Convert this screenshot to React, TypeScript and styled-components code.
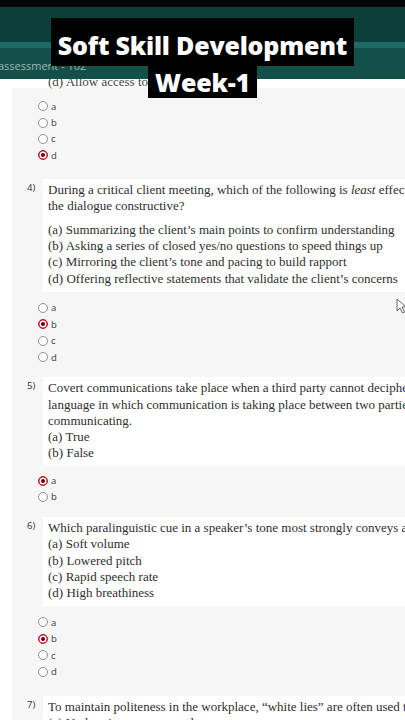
import React from 'react';
import styled, { createGlobalStyle } from 'styled-components';

const GlobalStyle = createGlobalStyle`
    html, body {
        margin: 0;
        padding: 0;
        width: 405px;
        height: 720px;
        overflow: hidden;
        background: #ffffff;
    }
`;

const Page = styled.div`
    position: relative;
    width: 405px;
    height: 720px;
    overflow: hidden;
    background: #ffffff;
`;

const Header = styled.div`
    position: absolute;
    top: 0;
    left: 0;
    right: 0;
    height: 79px;
    z-index: 2;
    display: flex;
    flex-direction: column;
`;

const FrameBar = styled.div`
    height: 7px;
    background: #020606;
`;

const TealTop = styled.div`
    height: 35px;
    background: #0c3f3a;
`;

const TealStripe = styled.div`
    height: 6px;
    background: #1d6c64;
`;

const TealBottom = styled.div`
    flex: 1;
    background: #13504a;
    display: flex;
    align-items: center;
    padding-top: 4px;
    font-family: "Open Sans", "Liberation Sans", sans-serif;
    font-size: 11px;
    color: #9db9b4;
    white-space: nowrap;
`;

const Breadcrumb = styled.span`
    margin-left: -2px;
`;

const TitleOverlay = styled.div`
    position: absolute;
    top: 18px;
    left: 0;
    right: 0;
    z-index: 3;
    display: flex;
    flex-direction: column;
    align-items: center;
    font-family: "Open Sans", "Liberation Sans", sans-serif;
    font-weight: 800;
    color: #ffffff;
`;

interface TitleLineProps {
    $first?: boolean;
}

const TitleLine = styled.div<TitleLineProps>`
    background: #000000;
    font-size: 25px;
    line-height: 32px;
    letter-spacing: -0.2px;
    padding: ${(p: TitleLineProps) => (p.$first ? '11px 7px 5px' : '0 7px')};
    white-space: nowrap;
`;

const Body = styled.div`
    padding-top: 75px;
    padding-left: 12px;
`;

const Panel = styled.div`
    background: #f6f6f6;
    width: 520px;
    padding-bottom: 40px;
`;

const ClippedLine = styled.div`
    height: 13px;
    padding-left: 36px;
    font-family: "Liberation Serif", "Times New Roman", serif;
    font-size: 13px;
    line-height: 13px;
    color: #444;
    background: #ffffff;
    white-space: nowrap;
`;

interface RadioListProps {
    $top?: number;
    $bottom?: number;
}

const RadioList = styled.div<RadioListProps>`
    display: flex;
    flex-direction: column;
    padding-left: 26px;
    padding-top: ${(p: RadioListProps) => p.$top ?? 6}px;
    padding-bottom: ${(p: RadioListProps) => p.$bottom ?? 12}px;
`;

const RadioRow = styled.label`
    display: flex;
    align-items: center;
    height: 16.4px;
    font-family: "Open Sans", "Liberation Sans", sans-serif;
    font-size: 9.5px;
    color: #3a3a3a;
`;

interface CircleProps {
    $checked?: boolean;
}

const Circle = styled.span<CircleProps>`
    box-sizing: border-box;
    width: 10px;
    height: 10px;
    border-radius: 50%;
    margin-right: 3px;
    border: 1px solid ${(p: CircleProps) => (p.$checked ? '#c8102e' : '#8f8f8f')};
    background: ${(p: CircleProps) => (p.$checked ? '#c8102e' : '#ffffff')};
    display: flex;
    align-items: center;
    justify-content: center;

    &::after {
        content: '';
        display: ${(p: CircleProps) => (p.$checked ? 'block' : 'none')};
        width: 4px;
        height: 4px;
        border-radius: 50%;
        background: #5a0010;
        box-shadow: 0 0 0 1.5px #ffffff;
    }
`;

const QuestionRow = styled.div`
    display: flex;
    padding-left: 15px;
`;

const Number = styled.div`
    width: 16px;
    flex-shrink: 0;
    padding-top: 2px;
    font-family: "Open Sans", "Liberation Sans", sans-serif;
    font-size: 9.5px;
    color: #333;
`;

const QuestionBox = styled.div`
    flex: 1;
    background: #ffffff;
    padding: 3px 0 5px 5px;
    font-family: "Liberation Serif", "Times New Roman", serif;
    font-size: 13px;
    line-height: 16.2px;
    color: #2e2e2e;
`;

interface LineProps {
    $gap?: number;
}

const Line = styled.div<LineProps>`
    white-space: nowrap;
    margin-top: ${(p: LineProps) => p.$gap ?? 0}px;
`;

const Cursor = styled.svg`
    position: absolute;
    left: 396px;
    top: 298px;
    z-index: 1;
`;

interface Question {
    n: number;
    stem: React.ReactNode[];
    options: string[];
    optionGap?: number;
    radios: string[];
    checked: string;
    top?: number;
    bottom?: number;
}

const questions: Question[] = [
    {
        n: 4,
        stem: [
            <>During a critical client meeting, which of the following is <i>least</i> effective for keeping</>,
            <>the dialogue constructive?</>,
        ],
        options: [
            '(a) Summarizing the client\u2019s main points to confirm understanding',
            '(b) Asking a series of closed yes/no questions to speed things up',
            '(c) Mirroring the client\u2019s tone and pacing to build rapport',
            '(d) Offering reflective statements that validate the client\u2019s concerns',
        ],
        optionGap: 8,
        radios: ['a', 'b', 'c', 'd'],
        checked: 'b',
        top: 8,
        bottom: 12,
    },
    {
        n: 5,
        stem: [
            'Covert communications take place when a third party cannot decipher the',
            'language in which communication is taking place between two parties',
            'communicating.',
        ],
        options: ['(a)  True', '(b)  False'],
        radios: ['a', 'b'],
        checked: 'a',
        top: 6,
        bottom: 12,
    },
    {
        n: 6,
        stem: ['Which paralinguistic cue in a speaker\u2019s tone most strongly conveys anxiety?'],
        options: ['(a) Soft volume', '(b) Lowered pitch', '(c) Rapid speech rate', '(d) High breathiness'],
        radios: ['a', 'b', 'c', 'd'],
        checked: 'b',
        top: 8,
        bottom: 16,
    },
    {
        n: 7,
        stem: ['To maintain politeness in the workplace, \u201cwhite lies\u201d are often used to:'],
        options: ['(a) Undermine peers covertly', '(b) Smooth social interactions'],
        radios: [],
        checked: '',
    },
];

export default function App() {
    return (
        <Page>
            <GlobalStyle />
            <Header>
                <FrameBar />
                <TealTop />
                <TealStripe />
                <TealBottom>
                    <Breadcrumb>assessment - 102</Breadcrumb>
                </TealBottom>
            </Header>

            <TitleOverlay>
                <TitleLine $first>Soft Skill Development</TitleLine>
                <TitleLine>Week-1</TitleLine>
            </TitleOverlay>

            <Body>
                <Panel>
                    <ClippedLine>(d) Allow access to all information</ClippedLine>
                    <RadioList $top={10} $bottom={15}>
                        {['a', 'b', 'c', 'd'].map((r) => (
                            <RadioRow key={r}>
                                <Circle $checked={r === 'd'} />
                                {r}
                            </RadioRow>
                        ))}
                    </RadioList>

                    {questions.map((q) => (
                        <React.Fragment key={q.n}>
                            <QuestionRow>
                                <Number>{q.n})</Number>
                                <QuestionBox>
                                    {q.stem.map((s, i) => (
                                        <Line key={'s' + i}>{s}</Line>
                                    ))}
                                    {q.options.map((o, i) => (
                                        <Line key={'o' + i} $gap={i === 0 ? q.optionGap ?? 0 : 0}>
                                            {o}
                                        </Line>
                                    ))}
                                </QuestionBox>
                            </QuestionRow>
                            {q.radios.length > 0 && (
                                <RadioList $top={q.top} $bottom={q.bottom}>
                                    {q.radios.map((r) => (
                                        <RadioRow key={r}>
                                            <Circle $checked={r === q.checked} />
                                            {r}
                                        </RadioRow>
                                    ))}
                                </RadioList>
                            )}
                        </React.Fragment>
                    ))}
                </Panel>
            </Body>

            <Cursor width="11" height="16" viewBox="0 0 11 16">
                <path d="M1 1 L1 13 L4 10 L6.5 15 L8.5 14 L6 9 L10 9 Z" fill="#ffffff" stroke="#555" strokeWidth="0.9" strokeLinejoin="round" />
            </Cursor>
        </Page>
    );
}
